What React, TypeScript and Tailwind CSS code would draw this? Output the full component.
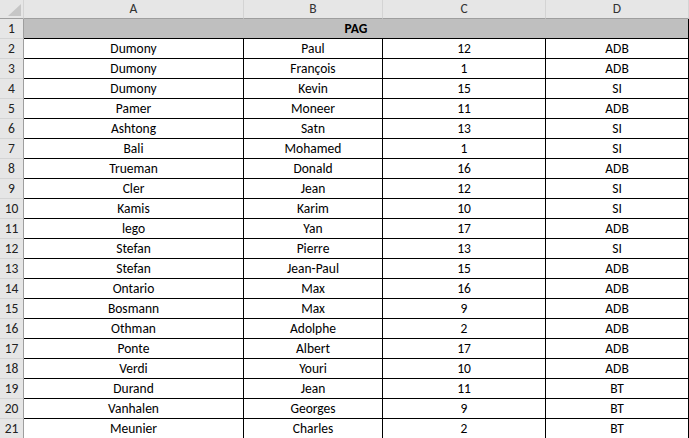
import React from 'react';

type Row = [string, string, string, string];

const rows: Row[] = [
  ['Dumony', 'Paul', '12', 'ADB'],
  ['Dumony', 'François', '1', 'ADB'],
  ['Dumony', 'Kevin', '15', 'SI'],
  ['Pamer', 'Moneer', '11', 'ADB'],
  ['Ashtong', 'Satn', '13', 'SI'],
  ['Bali', 'Mohamed', '1', 'SI'],
  ['Trueman', 'Donald', '16', 'ADB'],
  ['Cler', 'Jean', '12', 'SI'],
  ['Kamis', 'Karim', '10', 'SI'],
  ['lego', 'Yan', '17', 'ADB'],
  ['Stefan', 'Pierre', '13', 'SI'],
  ['Stefan', 'Jean-Paul', '15', 'ADB'],
  ['Ontario', 'Max', '16', 'ADB'],
  ['Bosmann', 'Max', '9', 'ADB'],
  ['Othman', 'Adolphe', '2', 'ADB'],
  ['Ponte', 'Albert', '17', 'ADB'],
  ['Verdi', 'Youri', '10', 'ADB'],
  ['Durand', 'Jean', '11', 'BT'],
  ['Vanhalen', 'Georges', '9', 'BT'],
  ['Meunier', 'Charles', '2', 'BT'],
];

const cols = ['A', 'B', 'C', 'D'];

function RowHead({ n }: { n: number }) {
  return (
    <div className="h-[20px] bg-[#e6e6e6] border-r border-b border-r-[#9e9e9e] border-b-[#d4d4d4] flex items-end justify-center pb-[1px] leading-[17px] text-[#222]">
      {n}
    </div>
  );
}

export default function App() {
  return (
    <div
      className="w-[689px] h-[438px] overflow-hidden bg-white text-[13.5px] text-black"
      style={{ fontFamily: 'Calibri, Carlito, Lato, "Liberation Sans", sans-serif' }}
    >
      <div className="grid grid-cols-[24px_220px_139px_163px_143px]">
        {/* column headers */}
        <div className="h-[19px] bg-[#e6e6e6] border-r border-b border-r-[#d4d4d4] border-b-[#9e9e9e] flex items-end justify-end pr-[2px] pb-[2px]">
          <svg width="13" height="12" viewBox="0 0 13 12">
            <polygon points="13,0 13,12 0,12" fill="#c6c6c6" />
          </svg>
        </div>
        {cols.map((c) => (
          <div
            key={c}
            className="h-[19px] bg-[#e6e6e6] border-r border-b border-r-[#d4d4d4] border-b-[#9e9e9e] flex items-end justify-center pb-[1px] leading-[17px] text-[#333]"
          >
            {c}
          </div>
        ))}

        {/* row 1 : merged title */}
        <RowHead n={1} />
        <div className="col-span-4 h-[20px] bg-[#bfbfbf] border-r border-b border-black flex items-end justify-center pb-[1px] leading-[17px] font-bold">
          PAG
        </div>

        {rows.map((r, i) => (
          <React.Fragment key={i}>
            <RowHead n={i + 2} />
            {r.map((v, j) => (
              <div
                key={j}
                className="h-[20px] border-r border-b border-black flex items-end justify-center pb-[1px] leading-[17px]"
              >
                {v}
              </div>
            ))}
          </React.Fragment>
        ))}
      </div>
    </div>
  );
}
